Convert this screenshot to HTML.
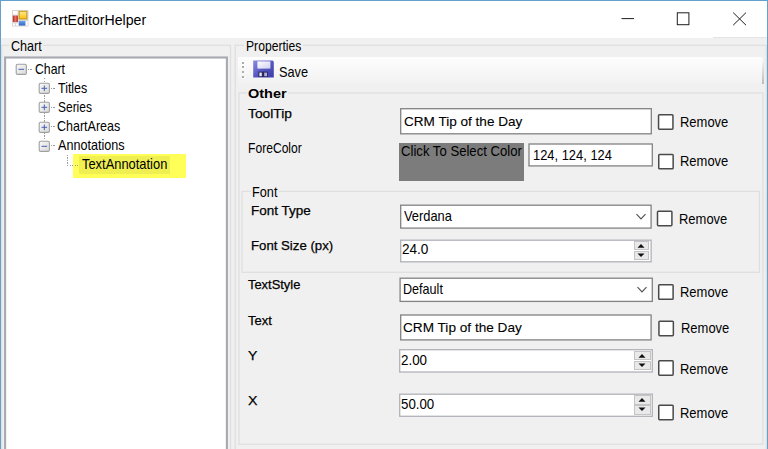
<!DOCTYPE html>
<html lang="en"><head><meta charset="utf-8"><title>ChartEditorHelper</title>
<style>
html,body{margin:0;padding:0;background:#f0f0f0;overflow:hidden}
#win{position:relative;width:768px;height:449px;overflow:hidden;font-family:'Liberation Sans', sans-serif}
.b{position:absolute;display:block}
.t{position:absolute;display:block;white-space:pre;transform-origin:0 0}
</style></head><body><div id="win">
<div class="b " style="left:0px;top:0px;width:768px;height:449px;background:#f0f0f0;"></div>
<div class="b " style="left:0px;top:0px;width:768px;height:38px;background:#fff;"></div>
<div class="b " style="left:0px;top:0px;width:768px;height:1px;background:#63a0cb;"></div>
<div class="b " style="left:0px;top:0px;width:1px;height:449px;background:#63a0cb;"></div>
<div class="b " style="left:767px;top:0px;width:1px;height:449px;background:#63a0cb;"></div>
<div class="b " style="left:713px;top:37px;width:54px;height:1px;background:#e4e4e4;"></div>
<svg class="b" style="left:11px;top:9px" width="19" height="19" viewBox="0 0 19 19">
<defs>
<linearGradient id="gy" x1="0" y1="0" x2="0" y2="1"><stop offset="0" stop-color="#ffe890"/><stop offset="1" stop-color="#ffc20a"/></linearGradient>
<linearGradient id="gr" x1="0" y1="0" x2="1" y2="0"><stop offset="0" stop-color="#b52a1c"/><stop offset=".5" stop-color="#e8736a"/><stop offset="1" stop-color="#b52a1c"/></linearGradient>
<linearGradient id="gb" x1="0" y1="0" x2="0" y2="1"><stop offset="0" stop-color="#6aa2f0"/><stop offset="1" stop-color="#2f66c8"/></linearGradient>
</defs>
<rect x="1" y="1" width="16.5" height="16.5" fill="#d6d6d6"/>
<rect x="2" y="2" width="4.6" height="3.6" fill="#fff"/>
<rect x="1.8" y="6.6" width="5.1" height="6.4" fill="url(#gr)"/>
<rect x="7.7" y="1.8" width="8.6" height="8.6" fill="#c59a1c"/>
<rect x="8.7" y="2.8" width="6.6" height="6.6" fill="url(#gy)"/>
<rect x="8" y="12" width="6.2" height="4.5" fill="url(#gb)"/>
<rect x="2" y="14.4" width="2" height="2.2" fill="#fff"/>
<rect x="5" y="14.4" width="2" height="2.2" fill="#fff"/>
<rect x="15" y="12" width="1.6" height="4.6" fill="#fff"/>
</svg>
<svg class="b" style="left:600px;top:0px" width="166" height="38" viewBox="0 0 166 38">
<g stroke="#1e1e1e" stroke-width="1" fill="none">
<path d="M21.5 18.6H34"/>
<rect x="77.3" y="12.8" width="11.6" height="11.9"/>
<path d="M133.2 12.6L146 25.2M146 12.6L133.2 25.2"/>
</g></svg>
<svg class="b" style="left:0;top:0" width="768" height="449" viewBox="0 0 768 449"><rect x="1.7" y="45.3" width="228.8" height="424.7" rx="0" fill="none" stroke="#dfdfdf" stroke-width="1.3"/></svg>
<div class="b " style="left:9px;top:40px;width:34px;height:12px;background:#f0f0f0;"></div>
<svg class="b" style="left:0;top:0" width="768" height="449" viewBox="0 0 768 449"><rect x="5.1" y="57.5" width="221.8" height="412.5" rx="0" fill="#fff" stroke="#a6a9b1" stroke-width="2.1"/></svg>
<div class="b " style="left:73.3px;top:154.2px;width:112.89999999999999px;height:23.600000000000023px;background:#ffff57;"></div>
<div class="b " style="left:79px;top:155.5px;width:91px;height:18.19999999999999px;background:#efef52;"></div>
<div class="b " style="left:28.1px;top:68.7px;width:3.8999999999999986px;height:1.0px;background:repeating-linear-gradient(90deg,#9c9c9c 0 1.25px,transparent 1.25px 2.5px);"></div>
<div class="b " style="left:44.0px;top:78.1px;width:1.0px;height:61.900000000000006px;background:repeating-linear-gradient(180deg,#9c9c9c 0 1.25px,transparent 1.25px 2.5px);"></div>
<div class="b " style="left:50.9px;top:88.0px;width:3.8999999999999986px;height:1.0px;background:repeating-linear-gradient(90deg,#9c9c9c 0 1.25px,transparent 1.25px 2.5px);"></div>
<div class="b " style="left:50.9px;top:107.0px;width:3.8999999999999986px;height:1.0px;background:repeating-linear-gradient(90deg,#9c9c9c 0 1.25px,transparent 1.25px 2.5px);"></div>
<div class="b " style="left:50.9px;top:126.1px;width:3.8999999999999986px;height:1.0px;background:repeating-linear-gradient(90deg,#9c9c9c 0 1.25px,transparent 1.25px 2.5px);"></div>
<div class="b " style="left:50.9px;top:145.1px;width:3.8999999999999986px;height:1.0px;background:repeating-linear-gradient(90deg,#9c9c9c 0 1.25px,transparent 1.25px 2.5px);"></div>
<div class="b " style="left:66.9px;top:154.5px;width:1.0px;height:10.5px;background:repeating-linear-gradient(180deg,#9c9c9c 0 1.25px,transparent 1.25px 2.5px);"></div>
<div class="b " style="left:67.4px;top:164.5px;width:10.599999999999994px;height:1.0px;background:repeating-linear-gradient(90deg,#9c9c9c 0 1.25px,transparent 1.25px 2.5px);"></div>
<svg class="b" style="left:15.1px;top:63.2px" width="13" height="13" viewBox="0 0 13 13"><defs><linearGradient id="ge" x1="0" y1="0" x2="1" y2="1"><stop offset="0" stop-color="#fafafa"/><stop offset="1" stop-color="#d8d8d8"/></linearGradient></defs><rect x="1.2" y="1.2" width="10.2" height="10.2" rx="1.5" fill="url(#ge)" stroke="#a0a0a0" stroke-width="1.1"/><path d="M3.5 6.3H9.1" stroke="#4560b4" stroke-width="1"/></svg>
<svg class="b" style="left:38.1px;top:82.3px" width="13" height="13" viewBox="0 0 13 13"><defs><linearGradient id="ge" x1="0" y1="0" x2="1" y2="1"><stop offset="0" stop-color="#fafafa"/><stop offset="1" stop-color="#d8d8d8"/></linearGradient></defs><rect x="1.2" y="1.2" width="10.2" height="10.2" rx="1.5" fill="url(#ge)" stroke="#a0a0a0" stroke-width="1.1"/><path d="M3.5 6.3H9.1" stroke="#4560b4" stroke-width="1"/><path d="M6.3 3.5V9.1" stroke="#4560b4" stroke-width="1"/></svg>
<svg class="b" style="left:38.1px;top:101.4px" width="13" height="13" viewBox="0 0 13 13"><defs><linearGradient id="ge" x1="0" y1="0" x2="1" y2="1"><stop offset="0" stop-color="#fafafa"/><stop offset="1" stop-color="#d8d8d8"/></linearGradient></defs><rect x="1.2" y="1.2" width="10.2" height="10.2" rx="1.5" fill="url(#ge)" stroke="#a0a0a0" stroke-width="1.1"/><path d="M3.5 6.3H9.1" stroke="#4560b4" stroke-width="1"/><path d="M6.3 3.5V9.1" stroke="#4560b4" stroke-width="1"/></svg>
<svg class="b" style="left:38.1px;top:120.5px" width="13" height="13" viewBox="0 0 13 13"><defs><linearGradient id="ge" x1="0" y1="0" x2="1" y2="1"><stop offset="0" stop-color="#fafafa"/><stop offset="1" stop-color="#d8d8d8"/></linearGradient></defs><rect x="1.2" y="1.2" width="10.2" height="10.2" rx="1.5" fill="url(#ge)" stroke="#a0a0a0" stroke-width="1.1"/><path d="M3.5 6.3H9.1" stroke="#4560b4" stroke-width="1"/><path d="M6.3 3.5V9.1" stroke="#4560b4" stroke-width="1"/></svg>
<svg class="b" style="left:38.1px;top:139.5px" width="13" height="13" viewBox="0 0 13 13"><defs><linearGradient id="ge" x1="0" y1="0" x2="1" y2="1"><stop offset="0" stop-color="#fafafa"/><stop offset="1" stop-color="#d8d8d8"/></linearGradient></defs><rect x="1.2" y="1.2" width="10.2" height="10.2" rx="1.5" fill="url(#ge)" stroke="#a0a0a0" stroke-width="1.1"/><path d="M3.5 6.3H9.1" stroke="#4560b4" stroke-width="1"/></svg>
<svg class="b" style="left:0;top:0" width="768" height="449" viewBox="0 0 768 449"><rect x="235.2" y="45.3" width="531.1" height="424.7" rx="0" fill="none" stroke="#dfdfdf" stroke-width="1.3"/></svg>
<div class="b " style="left:244px;top:40px;width:59px;height:12px;background:#f0f0f0;"></div>
<div class="b " style="left:238px;top:57px;width:525px;height:26.5px;background:linear-gradient(180deg,#fdfdfd 0,#f9f9f9 40%,#f1f1f1 100%);border-radius:0 3px 0 0;"></div>
<div class="b " style="left:762.3px;top:60px;width:1.3000000000000682px;height:23.5px;background:linear-gradient(180deg,rgba(190,190,190,0) 0,#bdbdbd 100%);"></div>
<div class="b " style="left:242px;top:61.5px;width:2px;height:2.0px;background:#acacac;box-shadow:.5px .5px 0 #fff;"></div>
<div class="b " style="left:242px;top:66.2px;width:2px;height:2.0px;background:#acacac;box-shadow:.5px .5px 0 #fff;"></div>
<div class="b " style="left:242px;top:70.9px;width:2px;height:2.0px;background:#acacac;box-shadow:.5px .5px 0 #fff;"></div>
<div class="b " style="left:242px;top:75.6px;width:2px;height:2.0px;background:#acacac;box-shadow:.5px .5px 0 #fff;"></div>
<svg class="b" style="left:252px;top:59px" width="23" height="20" viewBox="0 0 23 20">
<defs><linearGradient id="gs" x1="0" y1="0" x2="1" y2="1"><stop offset="0" stop-color="#8c8ce0"/><stop offset=".5" stop-color="#5858c4"/><stop offset="1" stop-color="#3c3ca6"/></linearGradient>
<linearGradient id="gw" x1="0" y1="0" x2="1" y2="1"><stop offset="0" stop-color="#fff"/><stop offset="1" stop-color="#cfd2ee"/></linearGradient></defs>
<path d="M1.2 1.6H20.6L21.8 2.8V18.6H1.2Z" fill="url(#gs)"/>
<rect x="5.4" y="2.4" width="13" height="7.2" fill="url(#gw)"/>
<rect x="6.4" y="12.6" width="9.4" height="5.4" fill="#2a2a60"/>
<rect x="7.4" y="13.6" width="2.4" height="3.6" fill="#e8e8f4"/>
<rect x="12.2" y="13.6" width="2.8" height="3.6" fill="#b0b0d8"/>
</svg>
<svg class="b" style="left:0;top:0" width="768" height="449" viewBox="0 0 768 449"><rect x="238.9" y="92.9" width="524.0" height="351.3" rx="0" fill="none" stroke="#dfdfdf" stroke-width="1.3"/><rect x="242" y="191.4" width="517.4" height="80.9" rx="0" fill="none" stroke="#dfdfdf" stroke-width="1.3"/></svg>
<div class="b " style="left:247px;top:87px;width:41px;height:12px;background:#f0f0f0;"></div>
<div class="b " style="left:251px;top:186px;width:28px;height:12px;background:#f0f0f0;"></div>
<div class="b " style="left:399px;top:143px;width:124.5px;height:37.80000000000001px;background:#7c7c7c;"></div>
<svg class="b" style="left:0;top:0" width="768" height="449" viewBox="0 0 768 449"><rect x="400.7" y="108.7" width="250.6" height="25.1" rx="0" fill="#fff" stroke="#828282" stroke-width="1.3"/><rect x="529" y="144" width="123.3" height="21.9" rx="0" fill="#fff" stroke="#828282" stroke-width="1.3"/><rect x="400.7" y="205.2" width="250.4" height="22.9" rx="0" fill="#fff" stroke="#828282" stroke-width="1.3"/><rect x="400.7" y="240.2" width="250.4" height="21.6" rx="0" fill="#fff" stroke="#b0b2b8" stroke-width="1.3"/><rect x="400.1" y="278.2" width="252.2" height="23.2" rx="0" fill="#fff" stroke="#828282" stroke-width="1.3"/><rect x="400.7" y="315" width="250.4" height="24.9" rx="0" fill="#fff" stroke="#828282" stroke-width="1.3"/><rect x="399.7" y="349.7" width="252.6" height="22.3" rx="0" fill="#fff" stroke="#b0b2b8" stroke-width="1.3"/><rect x="399.7" y="394.2" width="252.6" height="22.1" rx="0" fill="#fff" stroke="#b0b2b8" stroke-width="1.3"/></svg>
<svg class="b" style="left:635.2px;top:213.2px" width="12" height="8" viewBox="0 0 12 8"><path d="M1.5 1.2L6 5.9L10.5 1.2" fill="none" stroke="#555" stroke-width="1.2"/></svg>
<svg class="b" style="left:636.3px;top:286.3px" width="12" height="8" viewBox="0 0 12 8"><path d="M1.5 1.2L6 5.9L10.5 1.2" fill="none" stroke="#555" stroke-width="1.2"/></svg>
<div class="b " style="left:633.6px;top:241px;width:15.799999999999955px;height:9.400000000000006px;background:#e9e9e9;border:1px solid #c4c4c4;box-sizing:border-box;"></div><div class="b " style="left:633.6px;top:251px;width:15.799999999999955px;height:9.399999999999977px;background:#e9e9e9;border:1px solid #c4c4c4;box-sizing:border-box;"></div><svg class="b" style="left:636.7px;top:241px" width="8" height="20" viewBox="0 0 8 20"><path d="M0.5 6.7L4 3.1L7.5 6.7Z" fill="#111"/><path d="M0.5 12.5L4 16.1L7.5 12.5Z" fill="#111"/></svg>
<div class="b " style="left:634.2px;top:350.8px;width:16.399999999999977px;height:9.399999999999977px;background:#e9e9e9;border:1px solid #c4c4c4;box-sizing:border-box;"></div><div class="b " style="left:634.2px;top:360.8px;width:16.399999999999977px;height:9.399999999999977px;background:#e9e9e9;border:1px solid #c4c4c4;box-sizing:border-box;"></div><svg class="b" style="left:637.6000000000001px;top:350.8px" width="8" height="20" viewBox="0 0 8 20"><path d="M0.5 6.7L4 3.1L7.5 6.7Z" fill="#111"/><path d="M0.5 12.5L4 16.1L7.5 12.5Z" fill="#111"/></svg>
<div class="b " style="left:634.2px;top:395.2px;width:16.399999999999977px;height:9.399999999999977px;background:#e9e9e9;border:1px solid #c4c4c4;box-sizing:border-box;"></div><div class="b " style="left:634.2px;top:405.2px;width:16.399999999999977px;height:9.399999999999977px;background:#e9e9e9;border:1px solid #c4c4c4;box-sizing:border-box;"></div><svg class="b" style="left:637.6000000000001px;top:395.2px" width="8" height="20" viewBox="0 0 8 20"><path d="M0.5 6.7L4 3.1L7.5 6.7Z" fill="#111"/><path d="M0.5 12.5L4 16.1L7.5 12.5Z" fill="#111"/></svg>
<svg class="b" style="left:0;top:0" width="768" height="449" viewBox="0 0 768 449"><rect x="658.55" y="114.75" width="14.4" height="14.4" rx="0.8" fill="#fff" stroke="#4a4a4a" stroke-width="1.5"/><rect x="658.75" y="154.45" width="14.4" height="14.4" rx="0.8" fill="#fff" stroke="#4a4a4a" stroke-width="1.5"/><rect x="657.5" y="211.25" width="14.4" height="14.4" rx="0.8" fill="#fff" stroke="#4a4a4a" stroke-width="1.5"/><rect x="658.7" y="284.8" width="14.4" height="14.4" rx="0.8" fill="#fff" stroke="#4a4a4a" stroke-width="1.5"/><rect x="658.95" y="321.25" width="14.4" height="14.4" rx="0.8" fill="#fff" stroke="#4a4a4a" stroke-width="1.5"/><rect x="658.75" y="360.75" width="14.4" height="14.4" rx="0.8" fill="#fff" stroke="#4a4a4a" stroke-width="1.5"/><rect x="658.75" y="405.25" width="14.4" height="14.4" rx="0.8" fill="#fff" stroke="#4a4a4a" stroke-width="1.5"/></svg>
<span class="t" style="left:32.95px;top:10.70px;font-size:14px;line-height:18px;font-weight:400;color:#000;transform:scaleX(1.0093);">ChartEditorHelper</span>
<span class="t" style="left:10.64px;top:36.90px;font-size:14.2px;line-height:18px;font-weight:400;color:#000;transform:scaleX(0.8881);">Chart</span>
<span class="t" style="left:246.17px;top:36.90px;font-size:14.2px;line-height:18px;font-weight:400;color:#000;transform:scaleX(0.8554);">Properties</span>
<span class="t" style="left:279.24px;top:62.80px;font-size:14.5px;line-height:19px;font-weight:400;color:#000;transform:scaleX(0.8786);">Save</span>
<span class="t" style="left:247.83px;top:85.30px;font-size:13px;line-height:17px;font-weight:700;color:#000;transform:scaleX(1.1133);">Other</span>
<span class="t" style="left:35.16px;top:59.70px;font-size:14.2px;line-height:18px;font-weight:400;color:#000;transform:scaleX(0.8651);">Chart</span>
<span class="t" style="left:58.45px;top:78.70px;font-size:14.2px;line-height:18px;font-weight:400;color:#000;transform:scaleX(0.8755);">Titles</span>
<span class="t" style="left:58.28px;top:97.70px;font-size:14.2px;line-height:18px;font-weight:400;color:#000;transform:scaleX(0.8434);">Series</span>
<span class="t" style="left:57.05px;top:116.70px;font-size:14.2px;line-height:18px;font-weight:400;color:#000;transform:scaleX(0.8809);">ChartAreas</span>
<span class="t" style="left:58.04px;top:135.70px;font-size:14.2px;line-height:18px;font-weight:400;color:#000;transform:scaleX(0.8890);">Annotations</span>
<span class="t" style="left:81.53px;top:155.10px;font-size:14.2px;line-height:18px;font-weight:400;color:#000;transform:scaleX(0.9090);">TextAnnotation</span>
<span class="t" style="left:247.92px;top:105.20px;font-size:13.4px;line-height:17px;font-weight:400;color:#000;transform:scaleX(1.0274);-webkit-text-stroke:.25px #000;">ToolTip</span>
<span class="t" style="left:247.77px;top:139.30px;font-size:14.2px;line-height:18px;font-weight:400;color:#000;transform:scaleX(0.8532);">ForeColor</span>
<span class="t" style="left:252.24px;top:182.70px;font-size:14.2px;line-height:18px;font-weight:400;color:#000;transform:scaleX(0.8954);">Font</span>
<span class="t" style="left:250.89px;top:202.40px;font-size:13.4px;line-height:17px;font-weight:400;color:#000;transform:scaleX(1.0055);-webkit-text-stroke:.25px #000;">Font Type</span>
<span class="t" style="left:250.91px;top:237.40px;font-size:13.4px;line-height:17px;font-weight:400;color:#000;transform:scaleX(0.9854);-webkit-text-stroke:.25px #000;">Font Size (px)</span>
<span class="t" style="left:248.23px;top:275.70px;font-size:13.4px;line-height:17px;font-weight:400;color:#000;transform:scaleX(0.9634);-webkit-text-stroke:.25px #000;">TextStyle</span>
<span class="t" style="left:248.22px;top:311.70px;font-size:13.4px;line-height:17px;font-weight:400;color:#000;transform:scaleX(0.9706);-webkit-text-stroke:.25px #000;">Text</span>
<span class="t" style="left:248.16px;top:347.10px;font-size:13.4px;line-height:17px;font-weight:400;color:#000;transform:scaleX(1.0450);-webkit-text-stroke:.25px #000;">Y</span>
<span class="t" style="left:247.75px;top:391.50px;font-size:13.4px;line-height:17px;font-weight:400;color:#000;transform:scaleX(1.0562);-webkit-text-stroke:.25px #000;">X</span>
<span class="t" style="left:403.69px;top:112.70px;font-size:13.4px;line-height:17px;font-weight:400;color:#000;transform:scaleX(1.0128);-webkit-text-stroke:.1px #000;">CRM Tip of the Day</span>
<span class="t" style="left:401.21px;top:142.30px;font-size:14.2px;line-height:18px;font-weight:400;color:#000;transform:scaleX(0.9257);">Click To Select Color</span>
<span class="t" style="left:532.73px;top:146.00px;font-size:14.2px;line-height:18px;font-weight:400;color:#000;transform:scaleX(0.9094);">124, 124, 124</span>
<span class="t" style="left:403.73px;top:207.20px;font-size:14.2px;line-height:18px;font-weight:400;color:#000;transform:scaleX(0.9066);">Verdana</span>
<span class="t" style="left:401.94px;top:240.45px;font-size:14.2px;line-height:18px;font-weight:400;color:#000;transform:scaleX(0.9564);">24.0</span>
<span class="t" style="left:402.74px;top:280.45px;font-size:14.2px;line-height:18px;font-weight:400;color:#000;transform:scaleX(0.8880);">Default</span>
<span class="t" style="left:403.38px;top:318.70px;font-size:13.4px;line-height:17px;font-weight:400;color:#000;transform:scaleX(1.0171);-webkit-text-stroke:.1px #000;">CRM Tip of the Day</span>
<span class="t" style="left:401.10px;top:351.30px;font-size:14.2px;line-height:18px;font-weight:400;color:#000;transform:scaleX(0.9419);">2.00</span>
<span class="t" style="left:401.10px;top:395.45px;font-size:14.2px;line-height:18px;font-weight:400;color:#000;transform:scaleX(0.9368);">50.00</span>
<span class="t" style="left:680.22px;top:112.70px;font-size:14.2px;line-height:18px;font-weight:400;color:#000;transform:scaleX(0.9144);">Remove</span>
<span class="t" style="left:680.22px;top:152.45px;font-size:14.2px;line-height:18px;font-weight:400;color:#000;transform:scaleX(0.9144);">Remove</span>
<span class="t" style="left:678.97px;top:209.70px;font-size:14.2px;line-height:18px;font-weight:400;color:#000;transform:scaleX(0.9144);">Remove</span>
<span class="t" style="left:680.22px;top:282.70px;font-size:14.2px;line-height:18px;font-weight:400;color:#000;transform:scaleX(0.9144);">Remove</span>
<span class="t" style="left:680.62px;top:318.70px;font-size:14.2px;line-height:18px;font-weight:400;color:#000;transform:scaleX(0.9144);">Remove</span>
<span class="t" style="left:680.22px;top:359.70px;font-size:14.2px;line-height:18px;font-weight:400;color:#000;transform:scaleX(0.9144);">Remove</span>
<span class="t" style="left:680.22px;top:403.70px;font-size:14.2px;line-height:18px;font-weight:400;color:#000;transform:scaleX(0.9144);">Remove</span>
</div></body></html>
